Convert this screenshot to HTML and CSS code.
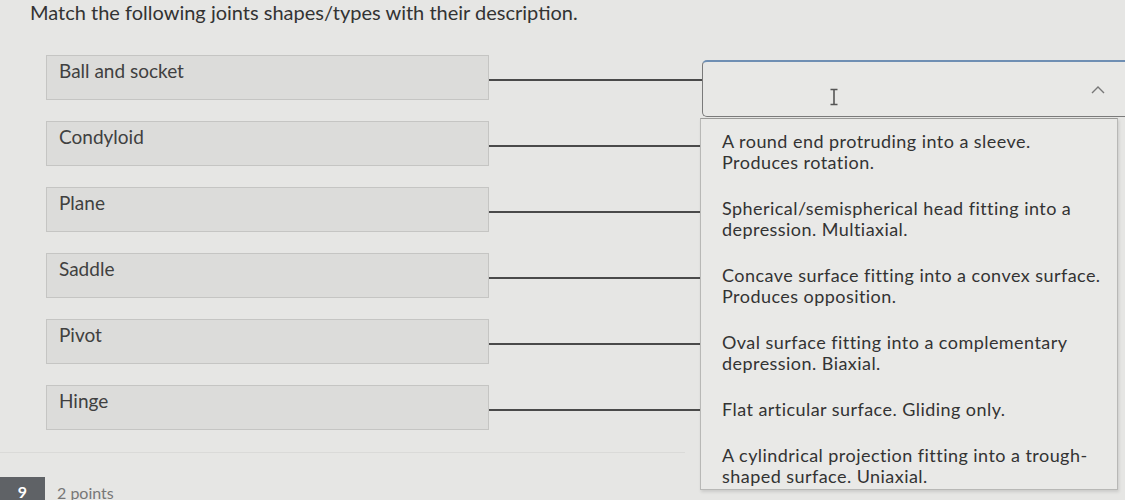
FILE: index.html
```html
<!DOCTYPE html>
<html>
<head>
<meta charset="utf-8">
<link rel="stylesheet" href="styles.css">
</head>
<body>
<div class="page">
  <h1 class="title">Match the following joints shapes/types with their description.</h1>
  <div class="question">
    <div class="rows">
      <div class="row">
        <div class="term">Ball and socket</div>
        <div class="link"></div>
        <div class="select is-open">
          <svg class="ibeam" width="10" height="18" viewBox="0 0 10 18"><path d="M1.5 1.5h7M5 1.5v15M1.5 16.5h7" fill="none" stroke="#555" stroke-width="1.6"/></svg>
          <svg class="caret" width="14" height="8" viewBox="0 0 14 8"><path d="M1 7l6-6 6 6" fill="none" stroke="#777" stroke-width="1.4"/></svg>
        </div>
      </div>
      <div class="row">
        <div class="term">Condyloid</div>
        <div class="link"></div>
        <div class="select is-covered"></div>
      </div>
      <div class="row">
        <div class="term">Plane</div>
        <div class="link"></div>
        <div class="select is-covered"></div>
      </div>
      <div class="row">
        <div class="term">Saddle</div>
        <div class="link"></div>
        <div class="select is-covered"></div>
      </div>
      <div class="row">
        <div class="term">Pivot</div>
        <div class="link"></div>
        <div class="select is-covered"></div>
      </div>
      <div class="row">
        <div class="term">Hinge</div>
        <div class="link"></div>
        <div class="select is-covered"></div>
      </div>
    </div>
    <ul class="menu">
      <li class="option">A round end protruding into a sleeve.<br>Produces rotation.</li>
      <li class="option">Spherical/semispherical head fitting into a<br>depression. Multiaxial.</li>
      <li class="option">Concave surface fitting into a convex surface.<br>Produces opposition.</li>
      <li class="option">Oval surface fitting into a complementary<br>depression. Biaxial.</li>
      <li class="option">Flat articular surface. Gliding only.</li>
      <li class="option">A cylindrical projection fitting into a trough-<br>shaped surface. Uniaxial.</li>
    </ul>
  </div>
  <div class="separator"></div>
  <div class="footer">
    <span class="num">9</span>
    <span class="pts">2 points</span>
  </div>
</div>
</body>
</html>
```

FILE: styles.css
```css
html, body {
  margin: 0;
  padding: 0;
  height: 100%;
  overflow: hidden;
  background: #e6e6e4;
}
.page {
  font-family: Lato, "Open Sans", sans-serif;
  color: #3c3c3c;
  width: 1125px;
  height: 500px;
  overflow: hidden;
  position: relative;
}
.title {
  margin: 0;
  padding: 0 0 0 30px;
  font-size: 20px;
  font-weight: 400;
  line-height: 24px;
  color: #333;
}
.question {
  position: relative;
  margin-top: 31px;
}
.rows {
  display: flex;
  flex-direction: column;
  gap: 4px;
}
.row {
  display: flex;
  align-items: flex-start;
  height: 62px;
}
.term {
  margin-left: 46px;
  width: 444px;
  height: 45px;
  box-sizing: border-box;
  padding: 4px 12px 0;
  font-size: 19px;
  line-height: 22px;
  color: #404040;
  background: #dcdcda;
  border: 1px solid #c5c5c3;
}
.link {
  width: 214px;
  margin-top: 24px;
  border-top: 2px solid #4a4a4a;
}
.select {
  position: relative;
  width: 424px;
  height: 57px;
  margin-top: 5px;
  box-sizing: border-box;
  border: 1px solid #7a7a7a;
  border-top: 2px solid #6f8fb3;
  border-right: none;
  border-radius: 5px 0 0 5px;
  background: #e8e8e6;
}
.select.is-covered {
  visibility: hidden;
}
.ibeam {
  position: absolute;
  left: 126px;
  top: 26px;
}
.caret {
  position: absolute;
  right: 20px;
  top: 24px;
}
.menu {
  position: absolute;
  top: 63px;
  left: 700px;
  width: 418px;
  height: 372px;
  margin: 0;
  padding: 0;
  list-style: none;
  box-sizing: border-box;
  background: #e9e9e7;
  border: 1px solid #b8b8b6;
  border-top: 1.5px solid #9a9a98;
  box-shadow: 1px 2px 3px rgba(0,0,0,0.12);
}
.option {
  padding: 12px 14px 13px 21px;
  font-size: 18px;
  letter-spacing: 0.45px;
  line-height: 21px;
  color: #333;
}
.separator {
  position: absolute;
  left: 0;
  right: 440px;
  top: 452px;
  border-top: 1px solid #dadad8;
}
.footer {
  position: absolute;
  left: 0;
  top: 477px;
  display: flex;
  align-items: flex-start;
  gap: 12px;
}
.num {
  width: 45px;
  height: 26px;
  background: #5f6266;
  color: #fff;
  font-size: 16px;
  font-weight: 700;
  text-align: center;
  line-height: 30px;
}
.pts {
  font-size: 16px;
  color: #777;
  line-height: 32px;
}
```
